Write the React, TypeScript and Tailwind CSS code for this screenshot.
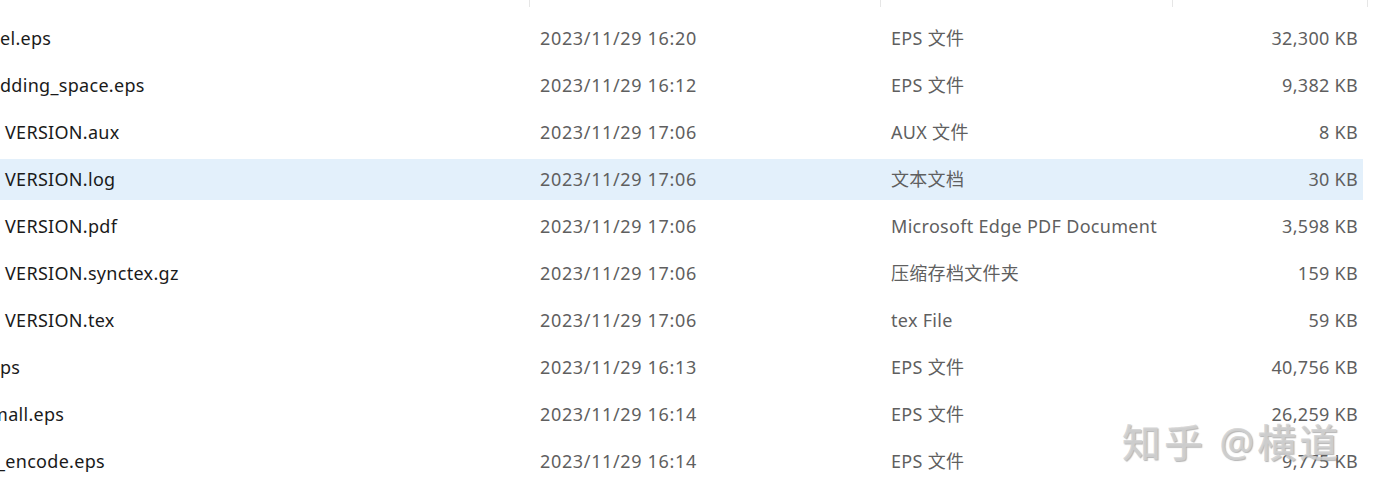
import React from 'react';

type Row = {
  name: string;
  nameClass?: string;
  date: string;
  type: string;
  size: string;
  selected?: boolean;
};

const rows: Row[] = [
  { name: 'el.eps', date: '2023/11/29 16:20', type: 'EPS 文件', size: '32,300 KB' },
  { name: 'dding_space.eps', date: '2023/11/29 16:12', type: 'EPS 文件', size: '9,382 KB' },
  { name: 'VERSION.aux', nameClass: 'pl-[5px]', date: '2023/11/29 17:06', type: 'AUX 文件', size: '8 KB' },
  { name: 'VERSION.log', nameClass: 'pl-[5px]', date: '2023/11/29 17:06', type: '文本文档', size: '30 KB', selected: true },
  { name: 'VERSION.pdf', nameClass: 'pl-[5px]', date: '2023/11/29 17:06', type: 'Microsoft Edge PDF Document', size: '3,598 KB' },
  { name: 'VERSION.synctex.gz', nameClass: 'pl-[5px]', date: '2023/11/29 17:06', type: '压缩存档文件夹', size: '159 KB' },
  { name: 'VERSION.tex', nameClass: 'pl-[5px]', date: '2023/11/29 17:06', type: 'tex File', size: '59 KB' },
  { name: 'ps', date: '2023/11/29 16:13', type: 'EPS 文件', size: '40,756 KB' },
  { name: 'mall.eps', nameClass: 'ml-[-9px]', date: '2023/11/29 16:14', type: 'EPS 文件', size: '26,259 KB' },
  { name: '_encode.eps', nameClass: 'ml-[-3px]', date: '2023/11/29 16:14', type: 'EPS 文件', size: '9,775 KB' },
];

export default function App() {
  return (
    <div
      className="relative w-[1375px] h-[495px] overflow-hidden bg-white text-[18px]"
      style={{ fontFamily: '"Noto Sans", "Noto Sans CJK SC", sans-serif' }}
    >
      {/* column header dividers */}
      <div className="grid grid-cols-[530px_351px_292px_195px_7px] h-[7px]">
        <div className="border-r border-[#e6e6e6]" />
        <div className="border-r border-[#e6e6e6]" />
        <div className="border-r border-[#e6e6e6]" />
        <div className="border-r border-[#e6e6e6]" />
        <div />
      </div>

      <div className="flex flex-col pt-[11px] gap-[6px]">
        {rows.map((r) => (
          <div
            key={r.date + r.name}
            className={`grid grid-cols-[530px_351px_292px_185px] w-[1363px] h-[41px] items-center ${
              r.selected ? 'bg-[#e3f0fb]' : ''
            }`}
          >
            <div className="overflow-hidden whitespace-nowrap text-[#1a1a1a] tracking-[0.3px]">
              <span className={`block ${r.nameClass ?? ''}`}>{r.name}</span>
            </div>
            <div className="pl-[10px] text-[#5f5f5f] whitespace-nowrap tracking-[0.65px]">{r.date}</div>
            <div className="pl-[10px] text-[#5f5f5f] whitespace-nowrap tracking-[0.3px]">{r.type}</div>
            <div className="text-right text-[#5f5f5f] whitespace-nowrap tracking-[0.3px]">{r.size}</div>
          </div>
        ))}
      </div>

      {/* watermark */}
      <div
        className="absolute left-[1122px] top-[413px] text-[39px] font-medium text-[#d2d2d2]/85 whitespace-nowrap tracking-[3px]"
        style={{ textShadow: '1px 1px 1px rgba(90,90,90,0.45)' }}
      >
        知乎 @横道
      </div>
    </div>
  );
}
